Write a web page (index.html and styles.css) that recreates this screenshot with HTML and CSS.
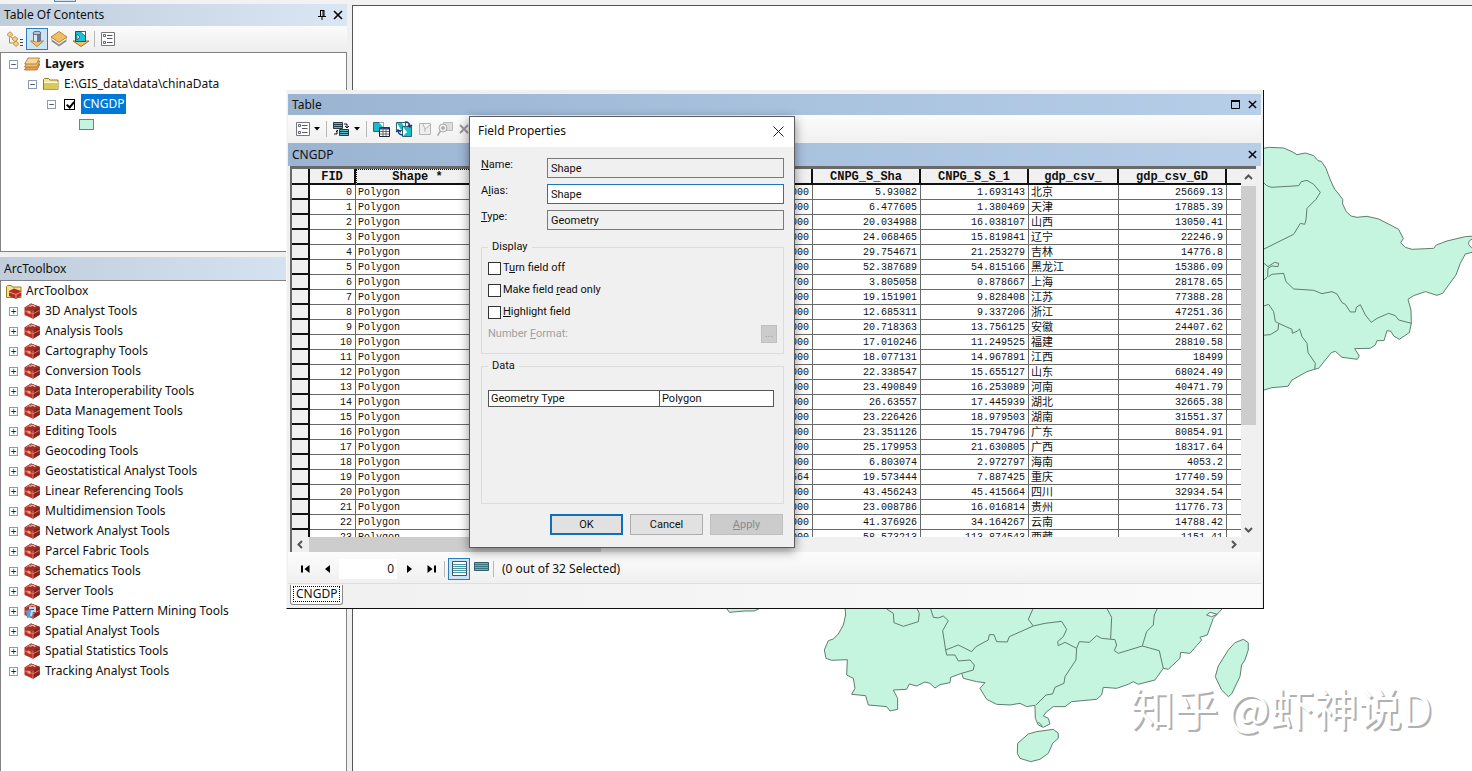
FILE: index.html
```html
<!DOCTYPE html>
<html lang="en">

<head>
  <meta charset="UTF-8" />
  <meta name="viewport" content="width=device-width, initial-scale=1" />
  <title>ArcMap - Field Properties</title>
  <link rel="stylesheet" href="styles.css">
</head>

<body>
  <!-- shared icons -->
  <svg class="sprite" width="0" height="0" aria-hidden="true">
    <symbol id="i-toolbox" viewBox="0 0 16 16">
      <path d="M0.5 4.5 7 0.5l8.7 3.2v8L9 15.8 0.5 12z" fill="#bb3027" />
      <path d="M0.5 4.5 7 0.5l8.7 3.2L9 7.5z" fill="#9a3029" />
      <path d="M9 7.5l6.7-3.8v8L9 15.8z" fill="#85231e" />
      <path d="M2 4.5 7 1.7l5 1.8" stroke="#e07a66" fill="none" />
      <path d="M0.8 8 9 10.8l6.7-3.5M9 7.5v8" stroke="#e58a70" stroke-width=".8" fill="none" />
      <path d="M3.5 7.5l3 1v2.4l-3-1z" fill="#f0b08a" />
      <path d="M5.5 3.6l3-1.2 2.5 1" stroke="#f3d5c5" fill="none" />
    </symbol>
    <symbol id="i-folder" viewBox="0 0 16 14">
      <path d="M.5 12.5v-10l1-1h4l1.5 1.5h8v9.5z" fill="#f4e79a" stroke="#8d7a2b" />
      <path d="M1 5.5h14v7H1z" fill="#dcc75c" />
      <path d="M1 5.5h14" stroke="#fffbd0" />
    </symbol>
    <symbol id="i-layers" viewBox="0 0 16 14">
      <path d="M4 7h12l-3 6H.5z" fill="#e0a24d" stroke="#a86f28" stroke-width=".8" />
      <path d="M4 4h12l-3 6H.5z" fill="#efbe74" stroke="#a86f28" stroke-width=".8" />
      <path d="M4 1h11.5l-3 6H.7z" fill="#f8d59a" stroke="#a86f28" stroke-width=".8" />
    </symbol>
    <symbol id="i-options" viewBox="0 0 14 14">
      <path d="M.5.5h13v13H.5z" fill="#fff" stroke="#777" />
      <path d="M6 3.5h5.5M6 6.5h5.5M6 10.5h5.5" stroke="#556" />
      <path d="M2.5 2.5h2v2h-2zM2.5 9.5h2v2h-2z" fill="#fff" stroke="#345" stroke-width=".8" />
    </symbol>
    <symbol id="i-close" viewBox="0 0 10 10">
      <path d="M1 1l8 8M9 1L1 9" stroke="#000" stroke-width="1.6" />
    </symbol>
    <symbol id="i-caret" viewBox="0 0 6 4">
      <path d="M0 0h6L3 3.5z" fill="#000" />
    </symbol>
  </svg>

  <div class="desktop">
    <div class="top-strip"><span class="top-tab"></span></div>

    <div class="workspace">
      <aside class="dock">
        <section class="toc">
          <header class="panel-title">
            <span>Table Of Contents</span>
            <button class="plain" aria-label="Auto hide">
              <svg width="8" height="10" viewBox="0 0 8 10"><path d="M2 .5h4M2.5 0v6M5 0v6M6 0v6M0 6.5h8M4 7v3" stroke="#000" fill="none" /></svg>
            </button>
            <button class="plain" aria-label="Close contents"><svg width="10" height="10"><use href="#i-close" /></svg></button>
          </header>
          <div class="toc-tools">
            <button class="tool" aria-label="List by drawing order">
              <svg width="18" height="16" viewBox="0 0 18 16">
                <path d="M3.5 5v7h5M4 5l5 4" stroke="#b98c3c" fill="none" />
                <path d="M4 .8l3 2.8-3 2.8L1 3.6zM9 5.5l3 2.5-3 2.8L6 8zM10 10l3 2.7-3 2.7-3-2.7z" fill="#f4cf8d" stroke="#c4903a" />
                <path d="M14 8.5h3M14 11.5h3M14 14.5h3" stroke="#445" />
              </svg>
            </button>
            <button class="tool active" aria-label="List by source">
              <svg width="16" height="18" viewBox="0 0 16 18">
                <path d="M1.5 11h13L8 16.5z" fill="#f1c36a" stroke="#b98830" />
                <path d="M4 3v8q4 2.5 8 0V3z" fill="#68788f" />
                <path d="M5 3v8q1.5.8 3 .8V3z" fill="#dfe6ef" />
                <ellipse cx="8" cy="3" rx="4" ry="1.7" fill="#b9c4d4" stroke="#4b586c" stroke-width=".8" />
              </svg>
            </button>
            <button class="tool" aria-label="List by visibility">
              <svg width="18" height="16" viewBox="0 0 18 16">
                <path d="M1 10l8-5 8 5-8 5.5z" fill="#8a8a8a" />
                <path d="M1 8l8-5 8 5-8 5.5z" fill="#fff" stroke="#999" stroke-width=".6" />
                <path d="M1 6l8-5.5L17 6l-8 5.5z" fill="#f1bd68" stroke="#bb862f" />
              </svg>
            </button>
            <button class="tool" aria-label="List by selection">
              <svg width="18" height="16" viewBox="0 0 18 16">
                <path d="M1 10h16l-8 5.5z" fill="#f1bd68" stroke="#a9752b" />
                <path d="M3.5.5h10v10h-10z" fill="#17c3d6" stroke="#2b4d5c" />
                <path d="M8 .5l5.5 5V.5zM5 3l3 3-3 3z" fill="#fff" stroke="#2b4d5c" stroke-width=".8" />
              </svg>
            </button>
            <span class="sep"></span>
            <button class="tool" aria-label="Options"><svg width="14" height="14"><use href="#i-options" /></svg></button>
          </div>
          <ul class="tree toc-tree">
            <li><button class="expander" aria-label="Collapse Layers">&#8722;</button><svg class="icon" width="16" height="14"><use href="#i-layers" /></svg><b>Layers</b></li>
            <li class="level-1"><button class="expander" aria-label="Collapse folder">&#8722;</button><svg class="icon" width="16" height="14"><use href="#i-folder" /></svg><span>E:\GIS_data\data\chinaData</span></li>
            <li class="level-2"><button class="expander" aria-label="Collapse CNGDP">&#8722;</button><input type="checkbox" class="layer-check" id="layerCheck" checked /><label class="layer-name" for="layerCheck">CNGDP</label></li>
            <li class="level-3"><span class="swatch"></span></li>
          </ul>
        </section>

        <section class="toolbox">
          <header class="panel-title"><span>ArcToolbox</span></header>
          <ul class="tree toolbox-tree" id="toolboxTree">
            <li class="root">
              <svg class="icon" width="16" height="15" viewBox="0 0 16 15">
                <path d="M.5 13.5v-11l1-1h4l1 1.5h8.5v10.5z" fill="#f4e28a" stroke="#9a7f25" />
                <path d="M3 7l5-2.5L15 7v5l-5 3-7-3z" fill="#b32a22" />
                <path d="M3 8l7 2.5L15 8M10 10v4" stroke="#ee9a80" fill="none" />
              </svg><span>ArcToolbox</span>
            </li>
          </ul>
        </section>
      </aside>

      <main class="map-pane">
        <svg class="map" viewBox="353 6 1119 765" preserveAspectRatio="xMinYMin slice" role="img" aria-label="Map of provinces">
          <!-- north east -->
          <g class="region" transform="translate(1252 130) scale(.3333)">
            <path class="land" d="M30 56 50 52 95 54 120 65 135 74 160 69 185 77 198 92 208 94 222 115 235 150 248 178 260 192 272 208 272 222 283 245 297 258 315 262 345 259 380 267 415 285 440 298 454 326 446 338 460 352 480 358 545 355 553 345 585 333 640 320 670 318V325Q648 328 650 343L658 353 670 355 660 367 640 372 625 400 612 435 590 465 572 490 555 496 520 485 485 497 468 508 477 540 478 580 472 608 442 628 425 618 417 604 405 602 396 632 375 632 370 645 355 655 308 656 322 678 316 688 270 682 250 664 238 668 200 715 188 718 165 725 120 750 108 769 60 773 30 782Z" />
            <path d="M30 150Q40 170 60 172L140 167 148 155 165 151 185 163 205 187 192 208 165 235 162 270 158 283 145 280 125 313 30 360" />
            <path d="M30 395 48 410 68 397 80 400 78 410 60 408 48 415 47 440 30 455M50 440 60 433 95 430 102 455 125 477 185 481 210 491 240 485 255 492 270 518 280 523 295 546 310 546 313 532 325 524 340 555 358 577 375 565 410 550 430 557 440 570 478 580" />
            <path d="M30 530 50 523 65 545 70 575 80 580 78 600 55 614 30 616M80 580 120 598 121 610 135 604 143 597 150 620 165 640 168 668 190 700 188 718" />
          </g>
          <!-- south -->
          <g class="region" transform="translate(720 590) scale(.3333)">
            <path class="land" d="M374 40 377 75 370 105 355 132 340 147 325 152 313 180 318 205 335 211 382 209 380 255 400 265 405 295 395 313 437 317 445 345 500 350 510 363 533 358 533 325 520 300 560 298 568 282 590 288 615 276 630 280 645 294 660 284 690 278 692 262 725 250 730 265 770 275 795 278 780 295 800 328 830 343 870 345 900 340 920 350 945 346 946 385 955 405 970 412 990 402 985 385 970 378 980 365 1000 350 1035 350 1055 335 1130 328 1145 315 1150 292 1190 295 1225 283 1240 275 1255 283 1305 270 1330 235 1345 238 1380 205 1382 187 1410 190 1445 150 1440 142 1462 135 1480 85 1508 55V40Z" />
            <path class="land" d="M925 432 950 425 1000 418 1015 430 1015 445 998 460 985 490 960 508 932 515 900 505 892 490 893 460ZM1570 148 1585 158 1585 180 1575 210 1565 225 1560 260 1535 312 1525 320 1505 300 1486 260 1495 228 1525 180 1545 158ZM16 50 28 67 75 63 103 63 130 50Z" />
            <path d="M500 57 520 70 522 98 550 109 595 95 598 70 588 50" />
            <path d="M630 50 640 82 655 84 670 78 685 92 668 122 677 180 715 165 755 185 768 170 805 150 808 134 822 134 830 155 862 156 868 140 940 108 925 88 942 50" />
            <path d="M940 108 975 100 1025 94 1040 118 1030 140 1013 155 1015 167 1035 157 1070 175 1068 210 1035 260 1032 280 1005 292 998 312 978 315 948 345" />
            <path d="M1070 175 1078 155 1108 157 1130 137 1145 145 1185 149 1190 165 1183 182 1195 190 1267 168 1280 125 1300 105 1303 75 1315 50" />
            <path d="M1158 50 1175 82 1172 147M1267 168 1318 182 1330 235" />
            <path d="M677 180 680 195 705 195 715 213 750 210 763 225 760 240 725 250M955 396 967 408" />
            <path class="bay" d="M1460 75 1470 67 1492 73 1475 80Z" />
          </g>
        </svg>
        <div class="watermark">知乎 @虾神说D</div>
      </main>
    </div>

    <section class="table-window">
      <header class="window-title">
        <span>Table</span>
        <button class="plain" aria-label="Maximize"><svg width="9" height="9" viewBox="0 0 9 9"><path d="M.5 1h8v7.5h-8z" fill="none" stroke="#000" /><path d="M0 1h9" stroke="#000" stroke-width="2" /></svg></button>
        <button class="plain" aria-label="Close table"><svg width="9" height="9"><use href="#i-close" /></svg></button>
      </header>
      <div class="table-tools">
        <button class="plain menu" aria-label="Table options"><svg width="14" height="14"><use href="#i-options" /></svg><svg width="6" height="4"><use href="#i-caret" /></svg></button>
        <span class="sep"></span>
        <button class="plain menu" aria-label="Related tables">
          <svg width="17" height="16" viewBox="0 0 17 16">
            <path d="M.5 1.5h9v6h-9zM6.5 8.5h9v6h-9z" fill="#5cb9c4" stroke="#223c47" />
            <path d="M.5 3.5h9M.5 5.5h9M6.5 10.5h9M6.5 12.5h9" stroke="#223c47" />
            <path d="M11 3h3v4M12 5l2 2 2-2M4 9v4h-3M3 11l2-2" stroke="#111" fill="none" />
          </svg><svg width="6" height="4"><use href="#i-caret" /></svg>
        </button>
        <span class="sep"></span>
        <button class="plain" aria-label="Select by attributes">
          <svg width="17" height="16" viewBox="0 0 17 16">
            <path d="M.5 1.5h10v9H.5z" fill="#19bccb" stroke="#36606d" /><path d="M6 1.5l4.5 5v-5z" fill="#fff" />
            <path d="M6.5 6.5h10v9h-10z" fill="#fff" stroke="#222" /><path d="M7 7.5h9" stroke="#24427e" stroke-width="2" />
            <path d="M7 10.5h9M7 13h9M10 7v8M13 7v8" stroke="#667" />
          </svg>
        </button>
        <button class="plain" aria-label="Switch selection">
          <svg width="17" height="16" viewBox="0 0 17 16">
            <path d="M.5 1.5h9v8h-9z" fill="#fff" stroke="#36606d" /><path d="M1 2h5l3 5-4 2z" fill="#19bccb" />
            <path d="M6.5 5.5h9v10h-9z" fill="#19bccb" stroke="#36606d" /><path d="M7 6l4 5-4 4z" fill="#fff" />
            <path d="M9 1q5 0 5 5M12 4l2 2 2-2M2 9q0 5 5 5M0 11l2-2 3 2" stroke="#123c78" stroke-width="1.4" fill="none" />
          </svg>
        </button>
        <button class="plain" disabled aria-label="Clear selection"><svg width="12" height="12" viewBox="0 0 12 12"><path d="M.5.5h11v11H.5zM4 1l2 5 5-4M6 6v3" fill="#eee" stroke="#b4b4b4" /></svg></button>
        <button class="plain" disabled aria-label="Zoom to selected"><svg width="16" height="16" viewBox="0 0 16 16"><path d="M6.5 1.5h9v8h-9z" fill="#ddd" stroke="#bbb" /><circle cx="6" cy="7" r="4" fill="#eee" stroke="#aaa" /><path d="M4 7h4M6 5v4M3.5 10L.5 14.5" stroke="#aaa" stroke-width="1.5" /></svg></button>
        <button class="plain" disabled aria-label="Delete selected"><svg width="10" height="10" viewBox="0 0 10 10"><path d="M1 1l8 8M9 1L1 9" stroke="#999" stroke-width="2" /></svg></button>
      </div>
      <header class="sub-title">
        <span>CNGDP</span>
        <button class="plain" aria-label="Close CNGDP"><svg width="9" height="9"><use href="#i-close" /></svg></button>
      </header>

      <div class="grid-box">
        <div class="grid-view">
          <table class="grid">
            <colgroup>
              <col class="c-select"><col class="c-fid"><col class="c-shape"><col class="c-wide"><col class="c-num"><col class="c-num"><col class="c-name"><col class="c-num"><col>
            </colgroup>
            <thead>
              <tr><th></th><th>FID</th><th class="focus">Shape *</th><th></th><th>CNPG_S_Sha</th><th>CNPG_S_S_1</th><th>gdp_csv_</th><th>gdp_csv_GD</th><th></th></tr>
            </thead>
            <tbody id="gridBody"></tbody>
          </table>
        </div>
        <div class="v-scroll">
          <button class="plain" aria-label="Scroll up"><svg width="9" height="6" viewBox="0 0 9 6"><path d="M1 5l3.5-3.5L8 5" /></svg></button>
          <span class="thumb"></span>
          <button class="plain" aria-label="Scroll down"><svg width="9" height="6" viewBox="0 0 9 6"><path d="M1 1l3.5 3.5L8 1" /></svg></button>
        </div>
        <div class="h-scroll">
          <button class="plain" aria-label="Scroll left"><svg width="6" height="9" viewBox="0 0 6 9"><path d="M5 1L1.5 4.5 5 8" /></svg></button>
          <span class="thumb"></span>
          <button class="plain" aria-label="Scroll right"><svg width="6" height="9" viewBox="0 0 6 9"><path d="M1 1l3.5 3.5L1 8" /></svg></button>
        </div>
      </div>

      <div class="record-bar">
        <button class="plain nav" aria-label="First record"><svg width="9" height="8" viewBox="0 0 9 8"><path d="M0 .5h2v7H0zM8.5 0v8l-5-4z" /></svg></button>
        <button class="plain nav" aria-label="Previous record"><svg width="5" height="8" viewBox="0 0 5 8"><path d="M5 0v8L0 4z" /></svg></button>
        <input type="text" class="record-no" value="0" aria-label="Record number" />
        <button class="plain nav" aria-label="Next record"><svg width="5" height="8" viewBox="0 0 5 8"><path d="M0 0v8l5-4z" /></svg></button>
        <button class="plain nav" aria-label="Last record"><svg width="9" height="8" viewBox="0 0 9 8"><path d="M7 .5h2v7H7zM.5 0v8l5-4z" /></svg></button>
        <span class="sep"></span>
        <button class="tool active" aria-label="Show all records"><svg width="15" height="15" viewBox="0 0 15 15"><path d="M.5.5h14v14H.5z" fill="#fff" stroke="#456" /><path d="M1 3.5h13M1 5.5h13M1 7.5h13M1 9.5h13M1 11.5h13" stroke="#4a96a4" /></svg></button>
        <button class="plain" aria-label="Show selected records"><svg width="15" height="15" viewBox="0 0 15 15"><path d="M.5 1.5h14v8H.5z" fill="#5cb9c4" stroke="#355c68" /><path d="M1 3.5h13M1 5.5h13M1 7.5h13" stroke="#3a7480" /></svg></button>
        <span class="sep"></span>
        <span class="record-info">(0 out of 32 Selected)</span>
      </div>
      <div class="tab-strip"><button class="tab"><span>CNGDP</span></button></div>
    </section>

    <form class="dialog" role="dialog" aria-label="Field Properties" onsubmit="return false">
      <header class="dialog-title">
        <span>Field Properties</span>
        <button type="button" class="plain" aria-label="Close dialog"><svg width="11" height="11" viewBox="0 0 11 11"><path d="M.5.5l10 10M10.5.5l-10 10" stroke="#222" /></svg></button>
      </header>
      <div class="dialog-body">
        <div class="fields">
          <label for="fieldName"><u>N</u>ame:</label>
          <input type="text" id="fieldName" value="Shape" readonly />
          <label for="fieldAlias">A<u>l</u>ias:</label>
          <input type="text" id="fieldAlias" class="editing" value="Shape" />
          <label for="fieldType"><u>T</u>ype:</label>
          <input type="text" id="fieldType" value="Geometry" readonly />
        </div>

        <fieldset class="display-group">
          <legend>Display</legend>
          <div class="option"><input type="checkbox" id="turnOff" /><label for="turnOff">T<u>u</u>rn field off</label></div>
          <div class="option"><input type="checkbox" id="readOnly" /><label for="readOnly">Make field <u>r</u>ead only</label></div>
          <div class="option"><input type="checkbox" id="highlight" /><label for="highlight"><u>H</u>ighlight field</label></div>
          <div class="option muted"><label for="numberFormat">Number <u>F</u>ormat:</label><button type="button" id="numberFormat" disabled>...</button></div>
        </fieldset>

        <fieldset class="data-group">
          <legend>Data</legend>
          <table class="props">
            <tr><td>Geometry Type</td><td>Polygon</td></tr>
          </table>
        </fieldset>

        <div class="actions">
          <button type="button" class="default">OK</button>
          <button type="button">Cancel</button>
          <button type="button" disabled><u>A</u>pply</button>
        </div>
      </div>
    </form>
  </div>

  <script>
    const toolboxes = [
      '3D Analyst Tools', 'Analysis Tools', 'Cartography Tools', 'Conversion Tools',
      'Data Interoperability Tools', 'Data Management Tools', 'Editing Tools', 'Geocoding Tools',
      'Geostatistical Analyst Tools', 'Linear Referencing Tools', 'Multidimension Tools',
      'Network Analyst Tools', 'Parcel Fabric Tools', 'Schematics Tools', 'Server Tools',
      'Space Time Pattern Mining Tools', 'Spatial Analyst Tools', 'Spatial Statistics Tools',
      'Tracking Analyst Tools'
    ];

    // [length, CNPG_S_Sha, CNPG_S_S_1, name, GDP]
    const records = [
      ['000', '5.93082', '1.693143', '北京', '25669.13'],
      ['000', '6.477605', '1.380469', '天津', '17885.39'],
      ['000', '20.034988', '16.038107', '山西', '13050.41'],
      ['000', '24.068465', '15.819841', '辽宁', '22246.9'],
      ['000', '29.754671', '21.253279', '吉林', '14776.8'],
      ['000', '52.387689', '54.815166', '黑龙江', '15386.09'],
      ['700', '3.805058', '0.878667', '上海', '28178.65'],
      ['000', '19.151901', '9.828408', '江苏', '77388.28'],
      ['000', '12.685311', '9.337206', '浙江', '47251.36'],
      ['000', '20.718363', '13.756125', '安徽', '24407.62'],
      ['000', '17.010246', '11.249525', '福建', '28810.58'],
      ['000', '18.077131', '14.967891', '江西', '18499'],
      ['000', '22.338547', '15.655127', '山东', '68024.49'],
      ['000', '23.490849', '16.253089', '河南', '40471.79'],
      ['000', '26.63557', '17.445939', '湖北', '32665.38'],
      ['000', '23.226426', '18.979503', '湖南', '31551.37'],
      ['000', '23.351126', '15.794796', '广东', '80854.91'],
      ['000', '25.179953', '21.630805', '广西', '18317.64'],
      ['000', '6.803074', '2.972797', '海南', '4053.2'],
      ['664', '19.573444', '7.887425', '重庆', '17740.59'],
      ['000', '43.456243', '45.415664', '四川', '32934.54'],
      ['000', '23.008786', '16.016814', '贵州', '11776.73'],
      ['000', '41.376926', '34.164267', '云南', '14788.42'],
      ['000', '58.573213', '113.874543', '西藏', '1151.41']
    ];

    const spaceTimeMark = '<path d="M2 8l4-2 3 3-1 5-5 1z" fill="#5b9bd8"/><path d="M5 5h6v3H8l-1 5" stroke="#b9dcf6" stroke-width="2" fill="none"/>';

    document.getElementById('toolboxTree').insertAdjacentHTML('beforeend', toolboxes.map(name => `
      <li><button class="expander" aria-label="Expand ${name}">+</button><svg class="icon" width="16" height="16"><use href="#i-toolbox"/>${name.startsWith('Space Time') ? spaceTimeMark : ''}</svg><span>${name}</span></li>`).join(''));

    document.getElementById('gridBody').innerHTML = records.map((r, i) => `
      <tr><td></td><td class="num">${i}</td><td>Polygon</td><td class="num">${r[0]}</td><td class="num">${r[1]}</td><td class="num">${r[2]}</td><td class="cjk">${r[3]}</td><td class="num">${r[4]}</td><td></td></tr>`).join('');
  </script>
</body>

</html>
```
FILE: styles.css
```css
* {
  margin: 0;
  padding: 0;
  box-sizing: border-box;
}

body {
  font-family: 'Noto Sans', 'Noto Sans CJK SC', sans-serif;
  font-size: 12px;
  line-height: 20px;
  color: #111;
  background-color: #f0f0f0;
}

button,
input {
  font: inherit;
  color: inherit;
}

svg {
  display: block;
  flex: none;
}

.sprite {
  position: absolute;
}

.desktop {
  position: relative;
  display: flex;
  flex-direction: column;
  min-height: 100vh;
  overflow: hidden;
}

.top-strip {
  height: 4px;
  padding-left: 54px;
  background-color: #f2f2f2;
}

.top-tab {
  display: block;
  width: 22px;
  height: 2px;
  border: 1px solid #4a90c4;
  border-top: none;
  background-color: #cfe4f5;
}

.workspace {
  flex: 1;
  display: flex;
  gap: 5px;
}

.plain {
  display: flex;
  align-items: center;
  justify-content: center;
  border: none;
  background: none;
}

.sep {
  width: 1px;
  height: 16px;
  background-color: #b8b8b8;
}

.tool {
  display: flex;
  align-items: center;
  justify-content: center;
  width: 22px;
  height: 22px;
  border: 1px solid transparent;
  background: none;
}

.tool.active {
  border-color: #2a7fba;
  background-color: #cbe3f5;
}

/* left dock */
.dock {
  width: 347px;
  display: flex;
  flex-direction: column;
  gap: 5px;
}

.panel-title {
  display: flex;
  align-items: center;
  gap: 7px;
  height: 22px;
  padding: 0 4px;
  background: linear-gradient(to right, #bfcddc, #dae6f4);
}

.panel-title span {
  flex: 1;
}

.toolbox .panel-title {
  height: 23px;
}

.toc-tools {
  display: flex;
  align-items: center;
  height: 26px;
  padding-left: 4px;
  background: linear-gradient(#fbfbfb, #eeeeee);
}

.toc-tools .sep {
  margin: 0 2px;
}

.tree {
  list-style: none;
  background-color: #fff;
  border: 1px solid #828282;
}

.tree li {
  display: flex;
  align-items: center;
  height: 20px;
  padding-left: 8px;
  white-space: nowrap;
}

.tree .icon {
  margin: 0 5px 0 6px;
}

.toc-tree {
  height: 200px;
  padding-top: 1px;
}

.tree .level-1 {
  padding-left: 27px;
}

.tree .level-2 {
  padding-left: 46px;
}

.tree .level-3 {
  padding-left: 78px;
}

.expander {
  width: 9px;
  height: 9px;
  border: 1px solid #8f9bb0;
  background-color: #fff;
  font-size: 10px;
  line-height: 7px;
  text-align: center;
  color: #223;
}

.layer-check {
  appearance: none;
  position: relative;
  width: 11px;
  height: 11px;
  margin: 0 6px 0 8px;
  border: 1px solid #000;
  background-color: #fff;
}

.layer-check:checked::after {
  content: '';
  position: absolute;
  left: 3px;
  top: 0;
  width: 3px;
  height: 6px;
  border: solid #000;
  border-width: 0 2px 2px 0;
  transform: rotate(40deg);
}

.layer-name {
  padding: 0 2px;
  background-color: #0078d7;
  color: #fff;
}

.swatch {
  width: 15px;
  height: 11px;
  border: 1px solid #6e8279;
  background-color: #c6f5df;
}

.toolbox {
  flex: 1;
  display: flex;
  flex-direction: column;
}

.toolbox-tree {
  flex: 1;
  border-bottom: none;
}

.tree .root {
  padding-left: 0;
}

.tree .root .icon {
  margin: 0 4px 0 5px;
}

/* map */
.map-pane {
  position: relative;
  flex: 1;
  margin-top: 1px;
  border-top: 1px solid #555;
  border-left: 1px solid #555;
  background-color: #fff;
}

.map {
  position: absolute;
  inset: 0;
  width: 100%;
  height: 100%;
}

.region path {
  fill: none;
  stroke: #5f7d70;
  stroke-width: 1;
  vector-effect: non-scaling-stroke;
}

.region .land {
  fill: #c6f5df;
}

.region .bay {
  fill: #fff;
}

.watermark {
  position: absolute;
  right: 40px;
  bottom: 32px;
  font-family: 'Noto Sans CJK SC', sans-serif;
  font-size: 44px;
  line-height: 64px;
  color: #fff;
  text-shadow: 2px 2px 0 #b0b0b0;
}

/* attribute table window */
.table-window {
  position: absolute;
  left: 286px;
  top: 90px;
  width: 978px;
  padding: 4px 2px 0 1px;
  border: 1px solid #f8f8f8;
  border-top: none;
  border-right-color: #111;
  border-bottom-color: #111;
  background-color: #f0f0f0;
}

.window-title,
.sub-title {
  display: flex;
  align-items: center;
  gap: 8px;
  height: 21px;
  padding: 0 4px;
  background: linear-gradient(to right, #9ab4d2, #b6cee8);
}

.sub-title {
  height: 23px;
}

.window-title span,
.sub-title span {
  flex: 1;
}

.table-tools {
  display: flex;
  align-items: center;
  gap: 6px;
  height: 28px;
  padding: 0 8px;
  background: linear-gradient(#fcfcfc, #f0f0f0);
}

.menu {
  gap: 4px;
}

.grid-box {
  display: grid;
  grid-template-columns: 1fr 15px;
  grid-template-rows: 368px 15px;
  margin: 0 5px 0 2px;
  border: solid #696969;
  border-width: 3px 0 0 2px;
}

.grid-view {
  overflow: hidden;
  background-color: #fff;
}

.grid {
  width: 100%;
  table-layout: fixed;
  border-spacing: 0;
  font-family: 'Liberation Mono', 'Noto Sans CJK SC', monospace;
  font-size: 10px;
  line-height: 12px;
}

.c-select {
  width: 18px;
}

.c-fid {
  width: 46px;
}

.c-shape {
  width: 123px;
}

.c-wide {
  width: 334px;
}

.c-num {
  width: 108px;
}

.c-name {
  width: 90px;
}

.grid th {
  height: 16px;
  padding-top: 2px;
  border: solid #111;
  border-width: 0 2px 2px 0;
  background-color: #f0f0f0;
  font-size: 12px;
}

.grid th:last-child {
  border-right: none;
}

.grid .focus {
  padding-top: 1px;
  border: 1px dotted #000;
  border-bottom: 2px solid #111;
}

.grid td {
  height: 15px;
  padding: 2px 3px 0 2px;
  border: solid #696969;
  border-width: 0 1px 1px 0;
  white-space: nowrap;
  overflow: hidden;
}

.grid td:first-child {
  border: solid #111;
  border-width: 0 2px 2px 0;
  background-color: #f0f0f0;
}

.grid td:last-child {
  border-right: none;
}

.grid .num {
  text-align: right;
}

.grid .cjk {
  font-size: 11px;
}

.v-scroll,
.h-scroll {
  display: flex;
  background-color: #f0f0f0;
}

.v-scroll path,
.h-scroll path {
  fill: none;
  stroke: #555;
  stroke-width: 2;
}

.v-scroll {
  flex-direction: column;
}

.v-scroll .plain,
.h-scroll .plain {
  width: 15px;
  height: 15px;
}

.v-scroll .plain:last-child {
  margin-top: auto;
}

.h-scroll .plain:last-child {
  margin-left: auto;
}

.thumb {
  background-color: #cdcdcd;
}

.v-scroll .thumb {
  margin-top: 2px;
  height: 239px;
}

.h-scroll .thumb {
  margin-left: 2px;
  width: 292px;
}

.record-bar {
  display: flex;
  align-items: center;
  height: 32px;
  padding: 2px 0 0 8px;
  border-bottom: 1px solid #dedede;
  background: linear-gradient(#fcfcfc, #f0f0f0);
}

.nav {
  width: 18px;
  height: 20px;
}

.nav + .nav {
  margin-left: 4px;
}

.record-no {
  width: 58px;
  height: 20px;
  margin: 0 3px;
  padding: 0 3px;
  border: none;
  background-color: #fff;
  text-align: right;
}

.record-bar .sep {
  margin: 0 3px 0 4px;
}

.record-bar .tool {
  margin-right: 4px;
}

.record-info {
  margin-left: 5px;
}

.tab-strip {
  height: 24px;
  padding-left: 2px;
  background: linear-gradient(to right, #f0f0f0, #fbfbfb);
}

.tab {
  height: 20px;
  padding: 1px 2px;
  border: 1px solid #888;
  border-top: none;
  border-radius: 0 0 3px 3px;
  background-color: #fff;
  line-height: 14px;
}

.tab span {
  display: block;
  padding: 0 2px;
  border: 1px dotted #000;
}

/* field properties dialog */
.dialog {
  position: absolute;
  left: 469px;
  top: 116px;
  width: 326px;
  border: 1px solid #5c5c5c;
  background-color: #f0f0f0;
  box-shadow: 0 3px 10px rgba(0, 0, 0, 0.45);
  font-family: Roboto, 'Noto Sans', sans-serif;
  font-size: 11px;
  line-height: 14px;
}

.dialog-title {
  display: flex;
  align-items: center;
  justify-content: space-between;
  height: 30px;
  padding: 0 10px 2px 8px;
  background-color: #fff;
  font-family: 'Noto Sans', sans-serif;
  font-size: 12px;
}

.dialog-body {
  padding: 11px 10px 12px 11px;
}

.fields {
  display: grid;
  grid-template-columns: 66px 1fr;
  row-gap: 6px;
}

.fields input {
  min-width: 0;
  height: 20px;
  padding: 0 3px;
  border: 1px solid #7a7a7a;
  background-color: #f0f0f0;
}

.fields .editing {
  border-color: #1f76b4;
  background-color: #fff;
}

fieldset {
  padding: 3px 6px 8px;
  border: 1px solid #dcdcdc;
}

legend {
  padding: 0 4px;
}

.display-group {
  margin-top: 10px;
}

.option {
  display: flex;
  align-items: center;
  gap: 2px;
  height: 22px;
}

.option input {
  appearance: none;
  width: 13px;
  height: 13px;
  border: 1px solid #333;
  background-color: #fff;
}

.muted {
  justify-content: space-between;
  color: #a0a0a0;
}

.muted button {
  width: 16px;
  height: 18px;
  border: 1px solid #bfbfbf;
  background-color: #ccc;
}

.data-group {
  min-height: 145px;
  margin-top: 5px;
  padding: 17px 9px 8px 6px;
}

.props {
  width: 100%;
  border-collapse: collapse;
  background-color: #fff;
}

.props td {
  width: 40%;
  height: 16px;
  padding: 0 2px;
  border: 1px solid #555;
}

.props td:first-child {
  width: 60%;
}

.actions {
  display: flex;
  justify-content: flex-end;
  gap: 7px;
  margin-top: 10px;
  padding-right: 1px;
}

.actions button {
  width: 73px;
  height: 21px;
  border: 1px solid #adadad;
  background-color: #e1e1e1;
}

.actions .default {
  border: 2px solid #0f6fb8;
}

.actions button:disabled {
  border-color: #bfbfbf;
  background-color: #ccc;
  color: #8a8a8a;
}
```
